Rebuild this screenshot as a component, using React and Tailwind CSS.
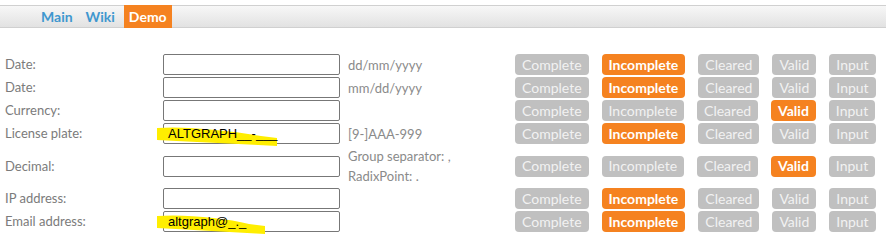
import React from "react";

const rows = [
  { label: "Date:", desc: ["dd/mm/yyyy"], active: "Incomplete" },
  { label: "Date:", desc: ["mm/dd/yyyy"], active: "Incomplete" },
  { label: "Currency:", desc: [], active: "Valid" },
  { label: "License plate:", desc: ["[9-]AAA-999"], active: "Incomplete", value: "ALTGRAPH__-___", hl: true },
  { label: "Decimal:", desc: ["Group separator: ,", "RadixPoint: ."], active: "Valid" },
  { label: "IP address:", desc: [], active: "Incomplete" },
  { label: "Email address:", desc: [], active: "Incomplete", value: "altgraph@_._", hl: true },
];

const badges = ["Complete", "Incomplete", "Cleared", "Valid", "Input"];

function Highlight({ w }) {
  return (
    <svg className="absolute left-[-9px] top-[-2px] pointer-events-none" width={w} height="26" viewBox={`0 0 ${w} 26`}>
      <path d={`M2 6 C 30 4, 70 8, ${w - 20} 14 L ${w - 4} 16 L ${w - 4} 24 C ${w - 40} 22, 40 20, 2 18 Z`} fill="#ffee00" />
    </svg>
  );
}

export default function App() {
  return (
    <div className="w-[886px] h-[244px] bg-white overflow-hidden" style={{ fontFamily: "Lato, 'Open Sans', sans-serif" }}>
      <div className="h-[5px]" />
      <div className="h-[23px] border-t border-b border-[#d0d0d0] bg-gradient-to-b from-[#f7f7f7] to-[#e2e2e2] flex items-stretch pl-[37px] gap-[5px]">
        <div className="px-[4px] flex items-center text-[14px] font-bold text-[#3f97cf]">Main</div>
        <div className="px-[4px] flex items-center text-[14px] font-bold text-[#3f97cf]">Wiki</div>
        <div className="px-[5px] flex items-center text-[14px] font-bold text-white bg-[#f58220] -mt-px -mb-px">Demo</div>
      </div>
      <div className="pt-[25px] flex flex-col">
        {rows.map((r, i) => (
          <div key={i} className="flex items-center py-px" style={{}}>
            <div className="w-[163px] pl-[5px] text-[13px] text-[#7b7b7b] leading-[21px]">{r.label}</div>
            <div className="w-[185px] shrink-0">
              <div className="relative w-[177px] h-[21px] border border-[#777] rounded-[2px] bg-white flex items-center pl-[4px] text-[13px] text-black" style={{ fontFamily: "'Liberation Sans', Arial, sans-serif" }}>
                {r.hl && <Highlight w={r.value.length > 12 ? 126 : 114} />}
                <span className="relative">{r.value || ""}</span>
              </div>
            </div>
            <div className="w-[167px] shrink-0 text-[13px] text-[#8a8a8a] leading-[20px]">
              {r.desc.map((d, j) => (
                <div key={j}>{d}</div>
              ))}
            </div>
            <div className="flex gap-[13px] items-center">
              {badges.map((b) => {
                const on = r.active === b;
                return (
                  <span
                    key={b}
                    className={
                      "h-[21px] px-[7px] rounded-[4px] flex items-center text-[14px] leading-none " +
                      (on ? "bg-[#f58220] text-white font-bold" : "bg-[#c0c0c0] text-[#f2f2f2]")
                    }
                  >
                    {b}
                  </span>
                );
              })}
            </div>
          </div>
        ))}
      </div>
    </div>
  );
}
